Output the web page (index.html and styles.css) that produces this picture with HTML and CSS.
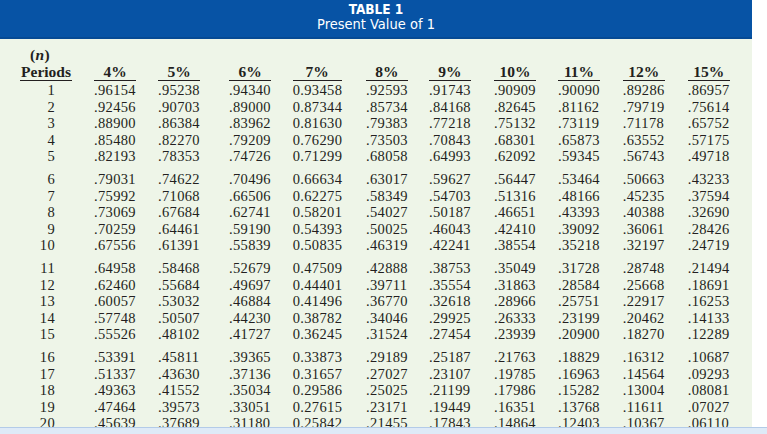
FILE: index.html
```html
<!DOCTYPE html>
<html>
<head>
<meta charset="utf-8">
<link rel="stylesheet" href="styles.css">
</head>
<body>
<div class="page">
  <header class="banner">
    <div class="title">TABLE 1</div>
    <div class="subtitle">Present Value of 1</div>
  </header>
  <main class="sheet">
    <div class="nline"><span class="n">(<i>n</i>)</span></div>
    <div class="row head">
      <div class="pcol"><span class="ul pl">Periods</span></div>
      <div><span class="ul">4%</span></div>
      <div><span class="ul">5%</span></div>
      <div><span class="ul">6%</span></div>
      <div><span class="ul wide">7%</span></div>
      <div><span class="ul">8%</span></div>
      <div><span class="ul">9%</span></div>
      <div><span class="ul">10%</span></div>
      <div><span class="ul">11%</span></div>
      <div><span class="ul">12%</span></div>
      <div><span class="ul">15%</span></div>
    </div>
    <div class="group">
      <div class="row"><div class="num">1</div><div>.96154</div><div>.95238</div><div>.94340</div><div>0.93458</div><div>.92593</div><div>.91743</div><div>.90909</div><div>.90090</div><div>.89286</div><div>.86957</div></div>
      <div class="row"><div class="num">2</div><div>.92456</div><div>.90703</div><div>.89000</div><div>0.87344</div><div>.85734</div><div>.84168</div><div>.82645</div><div>.81162</div><div>.79719</div><div>.75614</div></div>
      <div class="row"><div class="num">3</div><div>.88900</div><div>.86384</div><div>.83962</div><div>0.81630</div><div>.79383</div><div>.77218</div><div>.75132</div><div>.73119</div><div>.71178</div><div>.65752</div></div>
      <div class="row"><div class="num">4</div><div>.85480</div><div>.82270</div><div>.79209</div><div>0.76290</div><div>.73503</div><div>.70843</div><div>.68301</div><div>.65873</div><div>.63552</div><div>.57175</div></div>
      <div class="row"><div class="num">5</div><div>.82193</div><div>.78353</div><div>.74726</div><div>0.71299</div><div>.68058</div><div>.64993</div><div>.62092</div><div>.59345</div><div>.56743</div><div>.49718</div></div>
    </div>
    <div class="group">
      <div class="row"><div class="num">6</div><div>.79031</div><div>.74622</div><div>.70496</div><div>0.66634</div><div>.63017</div><div>.59627</div><div>.56447</div><div>.53464</div><div>.50663</div><div>.43233</div></div>
      <div class="row"><div class="num">7</div><div>.75992</div><div>.71068</div><div>.66506</div><div>0.62275</div><div>.58349</div><div>.54703</div><div>.51316</div><div>.48166</div><div>.45235</div><div>.37594</div></div>
      <div class="row"><div class="num">8</div><div>.73069</div><div>.67684</div><div>.62741</div><div>0.58201</div><div>.54027</div><div>.50187</div><div>.46651</div><div>.43393</div><div>.40388</div><div>.32690</div></div>
      <div class="row"><div class="num">9</div><div>.70259</div><div>.64461</div><div>.59190</div><div>0.54393</div><div>.50025</div><div>.46043</div><div>.42410</div><div>.39092</div><div>.36061</div><div>.28426</div></div>
      <div class="row"><div class="num">10</div><div>.67556</div><div>.61391</div><div>.55839</div><div>0.50835</div><div>.46319</div><div>.42241</div><div>.38554</div><div>.35218</div><div>.32197</div><div>.24719</div></div>
    </div>
    <div class="group">
      <div class="row"><div class="num">11</div><div>.64958</div><div>.58468</div><div>.52679</div><div>0.47509</div><div>.42888</div><div>.38753</div><div>.35049</div><div>.31728</div><div>.28748</div><div>.21494</div></div>
      <div class="row"><div class="num">12</div><div>.62460</div><div>.55684</div><div>.49697</div><div>0.44401</div><div>.39711</div><div>.35554</div><div>.31863</div><div>.28584</div><div>.25668</div><div>.18691</div></div>
      <div class="row"><div class="num">13</div><div>.60057</div><div>.53032</div><div>.46884</div><div>0.41496</div><div>.36770</div><div>.32618</div><div>.28966</div><div>.25751</div><div>.22917</div><div>.16253</div></div>
      <div class="row"><div class="num">14</div><div>.57748</div><div>.50507</div><div>.44230</div><div>0.38782</div><div>.34046</div><div>.29925</div><div>.26333</div><div>.23199</div><div>.20462</div><div>.14133</div></div>
      <div class="row"><div class="num">15</div><div>.55526</div><div>.48102</div><div>.41727</div><div>0.36245</div><div>.31524</div><div>.27454</div><div>.23939</div><div>.20900</div><div>.18270</div><div>.12289</div></div>
    </div>
    <div class="group">
      <div class="row"><div class="num">16</div><div>.53391</div><div>.45811</div><div>.39365</div><div>0.33873</div><div>.29189</div><div>.25187</div><div>.21763</div><div>.18829</div><div>.16312</div><div>.10687</div></div>
      <div class="row"><div class="num">17</div><div>.51337</div><div>.43630</div><div>.37136</div><div>0.31657</div><div>.27027</div><div>.23107</div><div>.19785</div><div>.16963</div><div>.14564</div><div>.09293</div></div>
      <div class="row"><div class="num">18</div><div>.49363</div><div>.41552</div><div>.35034</div><div>0.29586</div><div>.25025</div><div>.21199</div><div>.17986</div><div>.15282</div><div>.13004</div><div>.08081</div></div>
      <div class="row"><div class="num">19</div><div>.47464</div><div>.39573</div><div>.33051</div><div>0.27615</div><div>.23171</div><div>.19449</div><div>.16351</div><div>.13768</div><div>.11611</div><div>.07027</div></div>
      <div class="row"><div class="num">20</div><div>.45639</div><div>.37689</div><div>.31180</div><div>0.25842</div><div>.21455</div><div>.17843</div><div>.14864</div><div>.12403</div><div>.10367</div><div>.06110</div></div>
    </div>
  </main>
  <div class="bottom-bar"></div>
</div>
</body>
</html>
```

FILE: styles.css
```css
html, body {
  margin: 0;
  padding: 0;
  background: #ffffff;
}

.page {
  position: relative;
  width: 767px;
  height: 434px;
  overflow: hidden;
}

.banner {
  width: 752px;
  height: 39px;
  padding-top: 2px;
  box-sizing: border-box;
  background: #0753a5;
  border-bottom: 2px solid #064a94;
  color: #ffffff;
  text-align: center;
  font-family: "DejaVu Sans Condensed", "DejaVu Sans", sans-serif;
  font-stretch: condensed;
}

.title {
  font-size: 13.5px;
  font-weight: bold;
  line-height: 15px;
}

.subtitle {
  font-size: 14.5px;
  line-height: 15px;
}

.sheet {
  width: 752px;
  background: #eef5e8;
  padding-top: 7px;
  font-family: "Liberation Serif", "Times New Roman", serif;
  color: #231f20;
  font-size: 14.5px;
  letter-spacing: 0.35px;
}

.nline {
  height: 17px;
  line-height: 17px;
  font-weight: bold;
  font-size: 15.5px;
  padding-left: 30px;
}

.nline i {
  font-style: italic;
}

.row {
  display: grid;
  grid-template-columns: 94px 64px 71px 63.7px 73.3px 63px 65px 64px 64.7px 65px 64.3px;
  height: 16.5px;
  line-height: 16.5px;
  white-space: nowrap;
}

.row.head {
  height: 17.5px;
  line-height: 17px;
  font-weight: bold;
  font-size: 15.5px;
  letter-spacing: 0;
  margin-bottom: 1.8px;
}

.ul {
  display: inline-block;
  width: 42px;
  text-align: center;
  border-bottom: 1px solid #231f20;
}

.ul.wide {
  width: 49px;
}

.ul.pl {
  width: 52px;
  margin-left: 20px;
}

.num {
  text-align: right;
  padding-right: 39px;
}

.group {
  margin-bottom: 6.5px;
}

.bottom-bar {
  position: absolute;
  left: 0;
  right: 0;
  bottom: 0;
  height: 6px;
  background: #deeaf7;
  border-top: 1px solid #b3cbe8;
}
```
